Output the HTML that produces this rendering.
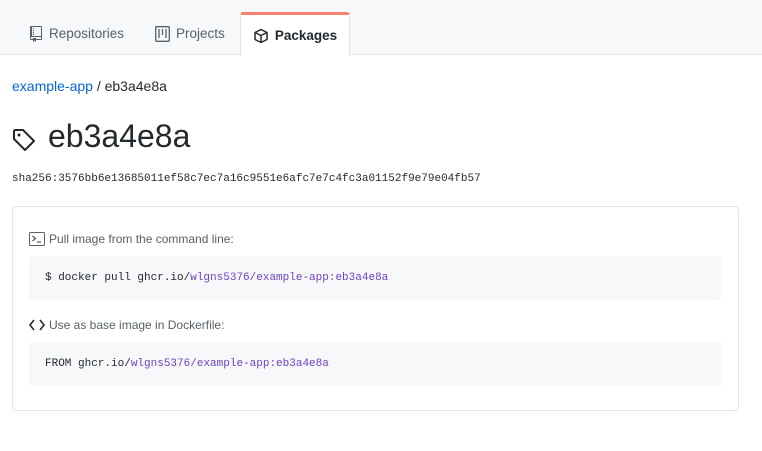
<!DOCTYPE html>
<html><head><meta charset="utf-8"><style>
*{margin:0;padding:0;box-sizing:border-box}
body{width:762px;height:451px;background:#fff;font-family:"Liberation Sans",sans-serif;color:#24292e;position:relative;overflow:hidden}
.hdr{position:absolute;left:0;top:0;width:762px;height:55px;background:#f6f8fa;border-bottom:1px solid #e1e4e8}
.tab{position:absolute;top:12px;height:43px;font-size:13.5px;color:#586069;display:flex;align-items:center;gap:6px;padding-left:0}
.act{left:240px;width:110px;background:#fff;border:1px solid #e1e4e8;border-top:3px solid #f9826c;border-bottom:none;border-radius:3px 3px 0 0;color:#24292e;font-weight:bold;justify-content:center;height:44px}
svg{display:block}
.mono{font-family:"Liberation Mono",monospace}
.box{position:absolute;left:12px;top:206px;width:727px;height:205px;border:1px solid #e1e4e8;border-radius:4px}
.code{position:absolute;left:29px;width:693px;height:44px;background:#f6f8fa;border-radius:4px;font-size:11px;padding-left:16px;line-height:44px}
.lbl{position:absolute;left:29px;font-size:12px;color:#586069;display:flex;align-items:center;gap:4px}
.p{color:#6f42c1}
</style></head><body>
<div class="hdr"></div>
<div class="tab" style="left:29px"><svg width="14" height="16" viewBox="0 0 12 16"><path fill="#586069" d="M4 9H3V8h1v1zm0-3H3v1h1V6zm0-2H3v1h1V4zm0-2H3v1h1V2zm8-1v12c0 .55-.45 1-1 1H6v2l-1.5-1.5L3 16v-2H1c-.55 0-1-.45-1-1V1c0-.55.45-1 1-1h10c.55 0 1 .45 1 1zm-1 10H1v2h2v-1h3v1h5v-2zm0-10H2v9h9V1z"/></svg>Repositories</div>
<div class="tab" style="left:155px"><svg width="15" height="16" viewBox="0 0 15 16" fill="none" stroke="#586069" stroke-width="1.3"><rect x="0.7" y="0.7" width="13.6" height="14.6" rx="1"/><path d="M4 3v9M7.5 3v6M11 3v9"/></svg>Projects</div>
<div class="tab act"><svg width="16" height="16" viewBox="0 0 16 16" fill="none" stroke="#24292e" stroke-width="1.5" stroke-linejoin="round"><path d="M8 1.5l6 3v7l-6 3-6-3v-7z"/><path d="M2 4.5l6 3 6-3M8 7.5v7"/></svg>Packages</div>
<div style="position:absolute;left:12px;top:78px;font-size:14px"><span style="color:#0366d6">example-app</span> / eb3a4e8a</div>
<svg style="position:absolute;left:12px;top:128px" width="24" height="24" viewBox="0 0 24 24" fill="none" stroke="#24292e" stroke-width="2" stroke-linejoin="round"><path d="M2 3v8l11 11 9-9L11 2H3z"/><circle cx="7" cy="7" r="1.5" fill="#24292e" stroke="none"/></svg>
<div style="position:absolute;left:48px;top:118px;font-size:32px;font-weight:500">eb3a4e8a</div>
<div class="mono" style="position:absolute;left:12px;top:173px;font-size:11px">sha256:3576bb6e13685011ef58c7ec7a16c9551e6afc7e7c4fc3a01152f9e79e04fb57</div>
<div class="box"></div>
<div class="lbl" style="top:232px"><svg width="16" height="14" viewBox="0 0 16 14"><rect x="0.5" y="0.5" width="15" height="13" rx="1" fill="none" stroke="#586069"/><path d="M3.5 4l3 2.5-3 2.5" fill="none" stroke="#586069" stroke-width="1.3"/><path d="M8 10h4" stroke="#586069" stroke-width="1.3"/></svg>Pull image from the command line:</div>
<div class="code mono" style="top:256px">$ docker pull ghcr.io/<span class="p">wlgns5376/example-app:eb3a4e8a</span></div>
<div class="lbl" style="top:318px"><svg width="16" height="12" viewBox="0 0 16 12"><path d="M5 1L1 6l4 5M11 1l4 5-4 5" fill="none" stroke="#24292e" stroke-width="1.6"/></svg>Use as base image in Dockerfile:</div>
<div class="code mono" style="top:342px">FROM ghcr.io/<span class="p">wlgns5376/example-app:eb3a4e8a</span></div>
</body></html>
